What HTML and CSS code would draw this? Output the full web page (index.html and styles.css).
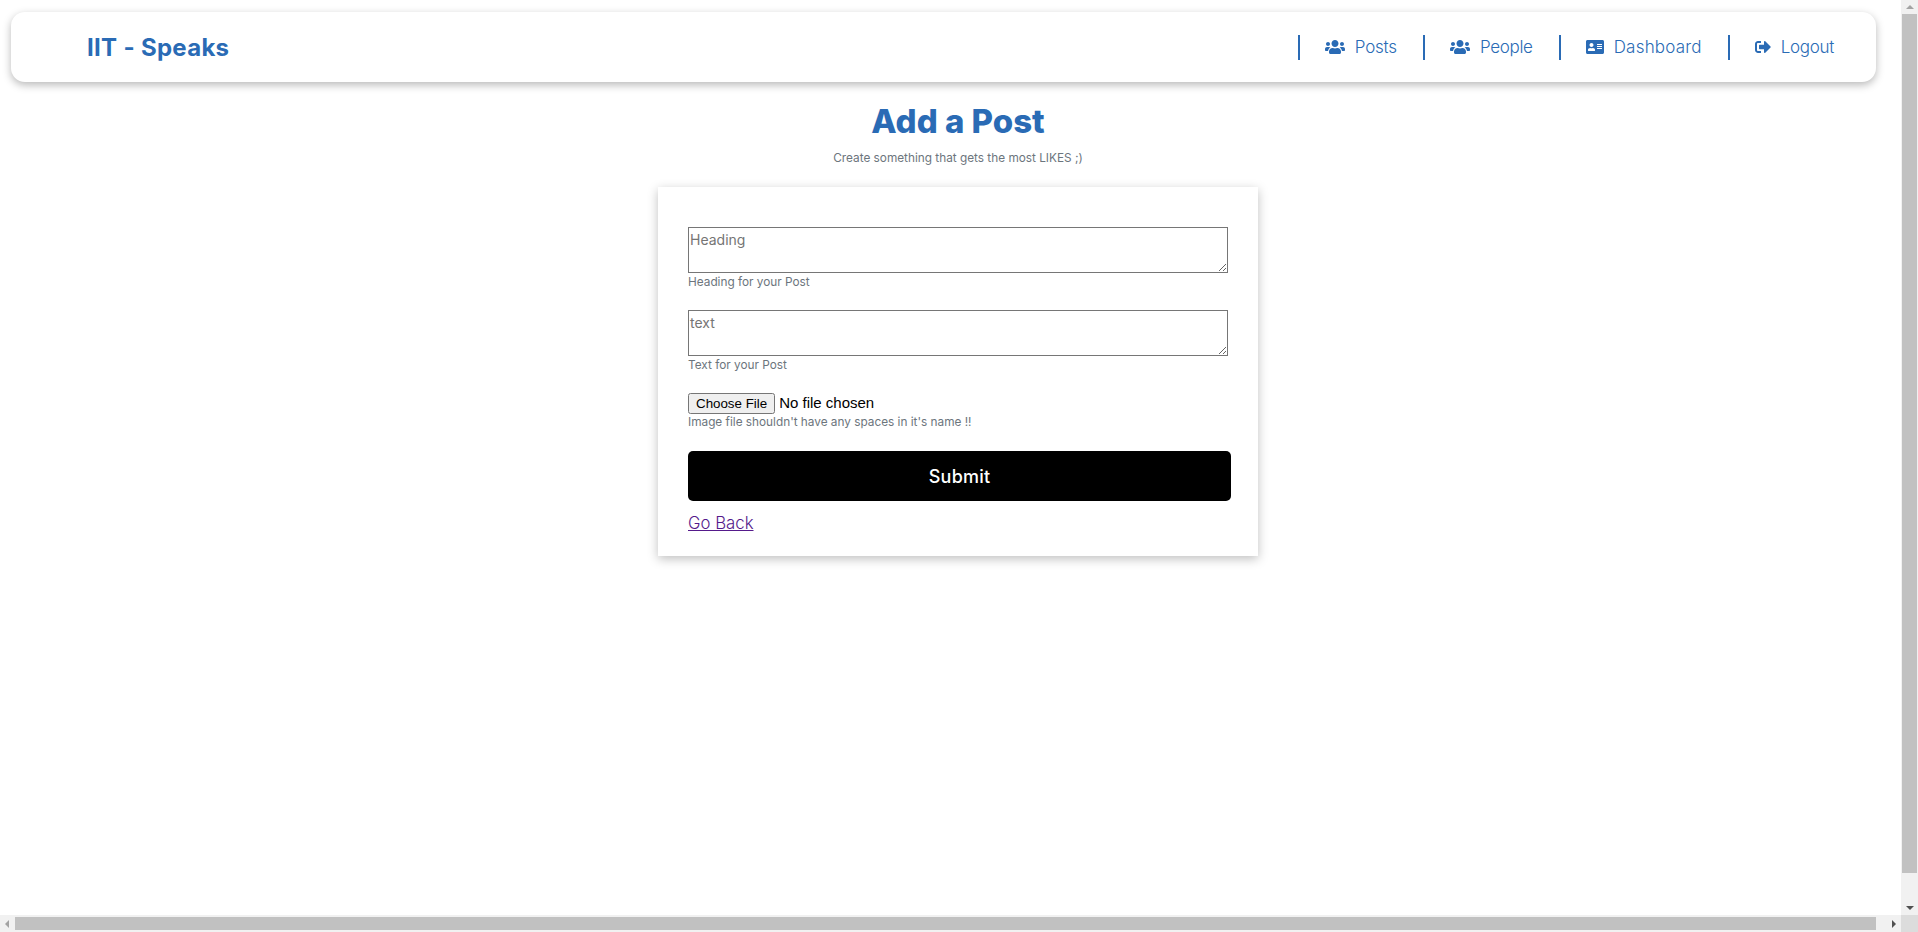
FILE: index.html
```html
<!DOCTYPE html>
<html lang="en">
<head>
<meta charset="utf-8">
<title>IIT - Speaks</title>
<link rel="stylesheet" href="styles.css">
</head>
<body>
<div class="window">
  <div class="viewport">
    <div class="page">
      <nav class="navbar">
        <a class="brand">IIT - Speaks</a>
        <ul class="nav-list">
          <li class="nav-item"><svg class="icon icon-users" viewBox="0 0 640 512"><path d="M96 224c35.3 0 64-28.7 64-64s-28.7-64-64-64-64 28.7-64 64 28.7 64 64 64zm448 0c35.3 0 64-28.7 64-64s-28.7-64-64-64-64 28.7-64 64 28.7 64 64 64zm32 32h-64c-17.6 0-33.5 7.1-45.1 18.6 40.3 22.1 68.9 62 75.1 109.4h66c17.7 0 32-14.3 32-32v-32c0-35.3-28.7-64-64-64zm-256 0c61.9 0 112-50.1 112-112S381.9 32 320 32 208 82.1 208 144s50.1 112 112 112zm76.8 32h-8.3c-20.8 10-43.9 16-68.5 16s-47.6-6-68.5-16h-8.3C179.6 288 128 339.6 128 403.2V432c0 26.5 21.5 48 48 48h288c26.5 0 48-21.5 48-48v-28.8c0-63.6-51.6-115.2-115.2-115.2zm-223.7-13.4C161.5 263.1 145.6 256 128 256H64c-35.3 0-64 28.7-64 64v32c0 17.7 14.3 32 32 32h65.9c6.3-47.4 34.9-87.3 75.2-109.4z"/></svg><span class="nav-text text-posts">Posts</span></li>
          <li class="nav-item"><svg class="icon icon-users" viewBox="0 0 640 512"><path d="M96 224c35.3 0 64-28.7 64-64s-28.7-64-64-64-64 28.7-64 64 28.7 64 64 64zm448 0c35.3 0 64-28.7 64-64s-28.7-64-64-64-64 28.7-64 64 28.7 64 64 64zm32 32h-64c-17.6 0-33.5 7.1-45.1 18.6 40.3 22.1 68.9 62 75.1 109.4h66c17.7 0 32-14.3 32-32v-32c0-35.3-28.7-64-64-64zm-256 0c61.9 0 112-50.1 112-112S381.9 32 320 32 208 82.1 208 144s50.1 112 112 112zm76.8 32h-8.3c-20.8 10-43.9 16-68.5 16s-47.6-6-68.5-16h-8.3C179.6 288 128 339.6 128 403.2V432c0 26.5 21.5 48 48 48h288c26.5 0 48-21.5 48-48v-28.8c0-63.6-51.6-115.2-115.2-115.2zm-223.7-13.4C161.5 263.1 145.6 256 128 256H64c-35.3 0-64 28.7-64 64v32c0 17.7 14.3 32 32 32h65.9c6.3-47.4 34.9-87.3 75.2-109.4z"/></svg><span class="nav-text text-people">People</span></li>
          <li class="nav-item"><svg class="icon icon-card" viewBox="0 0 576 512"><path d="M528 32H48C21.5 32 0 53.5 0 80v352c0 26.5 21.5 48 48 48h480c26.5 0 48-21.5 48-48V80c0-26.5-21.5-48-48-48zm-352 96c35.3 0 64 28.7 64 64s-28.7 64-64 64-64-28.7-64-64 28.7-64 64-64zm112 236.8c0 10.6-10 19.2-22.4 19.2H86.4C74 384 64 375.4 64 364.8v-19.2c0-31.8 30.1-57.6 67.2-57.6h5c12.3 5.1 25.7 8 39.8 8s27.6-2.9 39.8-8h5c37.1 0 67.2 25.8 67.2 57.6v19.2zM512 312c0 4.4-3.6 8-8 8H360c-4.4 0-8-3.6-8-8v-16c0-4.4 3.6-8 8-8h144c4.4 0 8 3.6 8 8v16zm0-64c0 4.4-3.6 8-8 8H360c-4.4 0-8-3.6-8-8v-16c0-4.4 3.6-8 8-8h144c4.4 0 8 3.6 8 8v16zm0-64c0 4.4-3.6 8-8 8H360c-4.4 0-8-3.6-8-8v-16c0-4.4 3.6-8 8-8h144c4.4 0 8 3.6 8 8v16z"/></svg><span class="nav-text text-dash">Dashboard</span></li>
          <li class="nav-item"><svg class="icon icon-out" viewBox="0 0 512 512"><path d="M497 273L329 441c-15 15-41 4.5-41-17v-96H152c-13.3 0-24-10.7-24-24v-96c0-13.3 10.7-24 24-24h136V88c0-21.4 25.9-32 41-17l168 168c9.3 9.4 9.3 24.6 0 34zM192 436v-40c0-6.6-5.4-12-12-12H96c-17.7 0-32-14.3-32-32V160c0-17.7 14.3-32 32-32h84c6.6 0 12-5.4 12-12V76c0-6.6-5.4-12-12-12H96c-53 0-96 43-96 96v192c0 53 43 96 96 96h84c6.6 0 12-5.4 12-12z"/></svg><span class="nav-text text-out">Logout</span></li>
        </ul>
      </nav>
      <h1 class="title">Add a Post</h1>
      <p class="subtitle">Create something that gets the most LIKES ;)</p>
      <form class="card">
        <div class="field">
          <textarea class="area" placeholder="Heading"></textarea>
          <small class="hint">Heading for your Post</small>
        </div>
        <div class="field">
          <textarea class="area" placeholder="text"></textarea>
          <small class="hint">Text for your Post</small>
        </div>
        <div class="field field-file">
          <input class="file" type="file">
          <small class="hint hint-file">Image file shouldn't have any spaces in it's name !!</small>
        </div>
        <button class="submit" type="button">Submit</button>
        <a class="back" href="#">Go Back</a>
      </form>
    </div>
  </div>
  <div class="vbar">
    <span class="arrow arrow-up"></span>
    <span class="vthumb"></span>
    <span class="arrow arrow-down"></span>
  </div>
  <div class="hbar">
    <span class="arrow arrow-left"></span>
    <span class="hthumb"></span>
    <span class="arrow arrow-right"></span>
  </div>
  <div class="corner"></div>
</div>
</body>
</html>
```
FILE: styles.css
```css
* { box-sizing: border-box; }
html, body { margin: 0; height: 100%; overflow: hidden; background: #fff; }
body { font-family: Inter, "Open Sans", sans-serif; color: #000; }

.window {
  display: grid;
  grid-template-columns: 1901px 17px;
  grid-template-rows: 915px 17px;
  width: 1918px;
  height: 932px;
}
.viewport { overflow: hidden; }
.page { width: 1916px; padding-top: 12px; }

.navbar {
  display: flex;
  align-items: center;
  justify-content: space-between;
  width: 1865px;
  height: 70px;
  margin-left: 11px;
  padding: 0 42px 0 76px;
  background: #fff;
  border-radius: 14px;
  box-shadow: 0 3px 8px rgba(0, 0, 0, 0.28);
}
.brand { color: #2a6bb5; font-size: 24px; font-weight: 700; letter-spacing: 0.3px; }
.nav-list { display: flex; margin: 0; padding: 0; list-style: none; }
.nav-item {
  display: flex;
  align-items: center;
  gap: 10px;
  height: 25px;
  padding: 0 0 0 25px;
  margin-left: 26px;
  border-left: 2px solid #2a6bb5;
  color: #2a6bb5;
}
.nav-text { font-size: 17px; font-weight: 300; white-space: nowrap; }
.text-posts { letter-spacing: -0.2px; }
.text-people { letter-spacing: -0.3px; }
.text-dash { letter-spacing: 0.2px; }
.text-out { letter-spacing: -0.3px; }
.icon { display: block; fill: #2a6bb5; height: 16px; }
.icon-users { width: 20px; }
.icon-card { width: 18px; }
.icon-out { width: 16px; }

.title {
  margin: 19px 0 0;
  text-align: center;
  color: #2a6bb5;
  font-size: 33px;
  line-height: 40px;
  font-weight: 800;
}
.subtitle {
  margin: 8px 0 0;
  text-align: center;
  color: #6c757d;
  font-size: 11.8px;
  line-height: 18px;
}
.card {
  width: 600px;
  height: 369px;
  margin: 20px auto 0;
  padding: 40px 30px 0;
  background: #fff;
  box-shadow: 0 3px 10px rgba(0, 0, 0, 0.25);
}
.field { margin-bottom: 20px; }
.area {
  display: block;
  width: 540px;
  height: 46px;
  padding: 2px 1px;
  border: 1px solid #767676;
  background: #fff;
  font-family: Inter, sans-serif;
  font-size: 14px;
  line-height: 20px;
}
.area::placeholder { color: #757575; }
.hint {
  display: block;
  margin-top: 1px;
  color: #6c757d;
  font-size: 11.8px;
  line-height: 16px;
}
.field-file { margin-bottom: 21px; }
.file {
  display: block;
  width: 300px;
  height: 21px;
  font-family: "Liberation Sans", Arial, sans-serif;
  font-size: 15px;
}
.file::file-selector-button {
  font-family: "Liberation Sans", Arial, sans-serif;
  font-size: 13.33px;
  height: 21px;
}
.hint-file { margin-top: 0; }
.submit {
  display: block;
  width: 543px;
  height: 50px;
  border: 0;
  border-radius: 5px;
  background: #000;
  color: #fff;
  font-family: Inter, sans-serif;
  font-size: 18px;
  font-weight: 500;
  letter-spacing: 0.2px;
}
.back {
  display: inline-block;
  margin-top: 12px;
  color: #551a8b;
  font-size: 16.8px;
  line-height: 20px;
  font-weight: 300;
}

.vbar {
  display: flex;
  flex-direction: column;
  align-items: center;
  background: #f1f1f1;
  padding: 5px 1px;
}
.vthumb { display: block; flex: none; width: 15px; height: 859px; margin: 5px 0 auto; background: #c1c1c1; }
.hbar {
  display: flex;
  align-items: center;
  background: #f1f1f1;
  padding: 0 5px;
}
.hthumb { display: block; flex: none; width: 1861px; height: 13px; margin: 0 auto 0 6px; background: #c1c1c1; }
.corner { background: #dcdcdc; }
.arrow { display: block; flex: none; width: 0; height: 0; border: 4px solid transparent; }
.arrow-up { border-top: 0; border-bottom: 4px solid #a3a3a3; }
.arrow-down { border-bottom: 0; border-top: 4px solid #505050; }
.arrow-left { border-left: 0; border-right: 4px solid #a3a3a3; }
.arrow-right { border-right: 0; border-left: 4px solid #505050; }
```
